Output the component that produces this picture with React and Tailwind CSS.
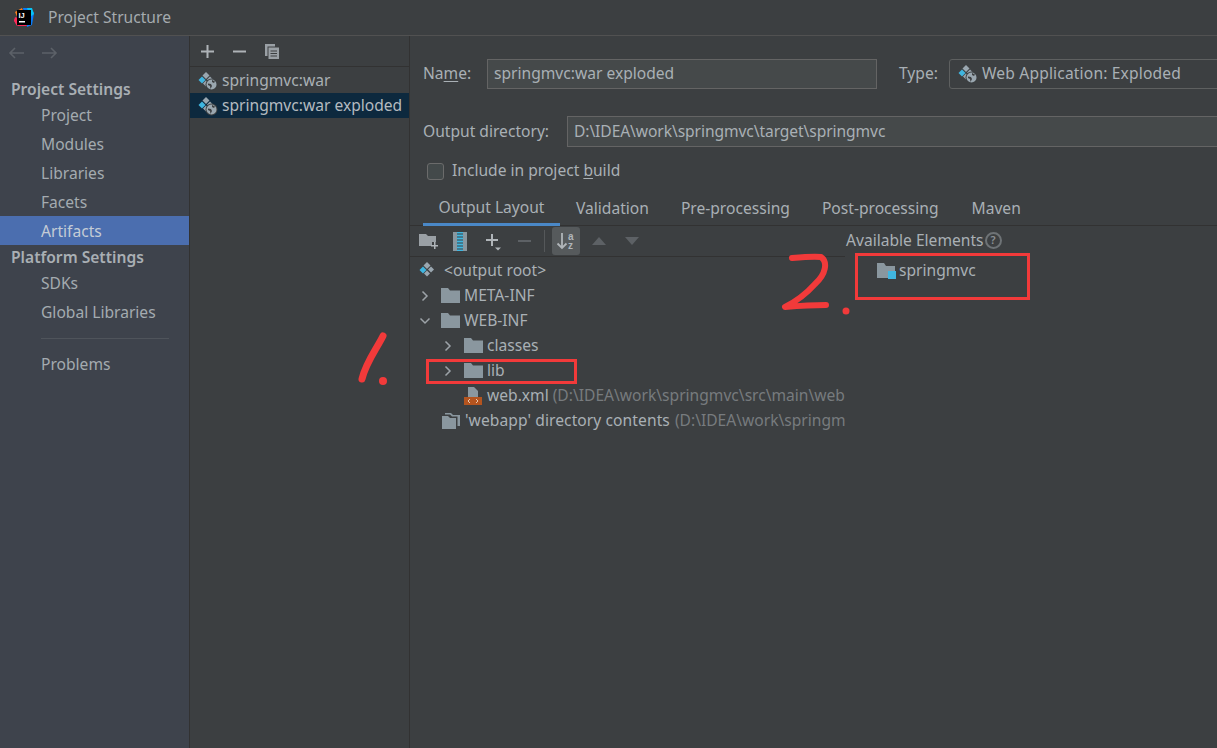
const TEXT = 'text-[#a9b0b5]';

function ArtifactIcon({ globe = true }) {
  return (
    <svg width="20" height="20" viewBox="0 0 20 20" className="shrink-0">
      <path d="M8 1l3.500 3.500L8 8 4.500 4.500z" fill="#9aa7b0" />
      <path d="M4 5.500L7.500 9 4 12.500.5 9z" fill="#40b6e0" />
      <path d="M12 5.500L15 8.500 12 11.500 9 8.500z" fill="#9aa7b0" />
      <path d="M8 9.500L11 12.500 8 15.500 5 12.500z" fill="#9aa7b0" />
      {globe && (
        <g>
          <circle cx="13.500" cy="13.500" r="6" fill="#3c3f41" />
          <circle cx="13.500" cy="13.500" r="5" fill="#9aa7b0" />
          <path d="M10 12.500l3 .5 1 2-1.500 3-.5-3-2-1zM14 9l3 1.500-1 1.500-2-1z" fill="#3c3f41" />
        </g>
      )}
    </svg>
  );
}

function Folder() {
  return (
    <svg width="19" height="15" viewBox="0 0 19 15" className="shrink-0">
      <path d="M0 0h7l2 2.500h10V15H0z" fill="#8a979f" />
    </svg>
  );
}

function Chevron({ open }) {
  return (
    <svg width="12" height="12" viewBox="0 0 12 12" className="shrink-0" fill="none" stroke="#9da3a8" strokeWidth="1.500">
      <path d={open ? 'M1.500 3.500L6 8l4.500-4.500' : 'M3.500 1.500L8 6l-4.500 4.500'} />
    </svg>
  );
}

function SideItem({ label, active, low }) {
  return (
    <div className={`h-[29px] pl-[41px] flex items-center ${low ? 'pt-[2px]' : ''} ${active ? 'bg-[#4b6eaf] text-[#c4ccd6]' : 'text-[#a4abb0]'}`}>
      {label}
    </div>
  );
}

function TreeRow({ indent, chevron, open, icon, label, hint }) {
  return (
    <div className="h-[25px] flex items-center whitespace-nowrap overflow-hidden" style={{ paddingLeft: indent }}>
      <span className="w-[22px] shrink-0 flex items-center">{chevron && <Chevron open={open} />}</span>
      <span className="w-[23px] shrink-0 flex items-center">{icon}</span>
      <span className={TEXT}>{label}</span>
      {hint && <span className="ml-[4px] text-[#777b7e]">{hint}</span>}
    </div>
  );
}

export default function App() {
  return (
    <div className="w-[1217px] h-[748px] overflow-hidden relative flex flex-col bg-[#3c3f41] text-[15.6px] font-['Noto_Sans','Open_Sans',sans-serif]">
      {/* Title bar */}
      <div className="h-[36px] shrink-0 flex items-center border-b border-[#515151] pl-[13px]">
        <svg width="21" height="21" viewBox="0 0 21 21">
          <path d="M2 5L9 1l2 5-6 6z" fill="#fc801d" />
          <path d="M2 10l5 3-3 6-3-5z" fill="#fe315d" />
          <path d="M10 1h8l3 5-2 12-5 2z" fill="#087cfa" />
          <path d="M14 1h5l2 6-4 3z" fill="#07c3f2" />
          <path d="M1 13l6-6 7 12H5z" fill="#fe2857" />
          <rect x="4" y="3" width="14" height="15" fill="#000" />
          <rect x="6" y="14" width="6" height="1.500" fill="#fff" />
          <text x="5.500" y="11" fontSize="7.500" fontWeight="700" fill="#fff" fontFamily="'Liberation Sans',sans-serif">IJ</text>
        </svg>
        <span className="ml-[14px] text-[#a5abaf]">Project Structure</span>
      </div>

      <div className="flex-1 flex min-h-0">
        {/* Sidebar */}
        <div className="w-[190px] shrink-0 bg-[#3e434c] border-r border-[#323232]">
          <div className="h-[34px] pl-[8px] flex items-center gap-[16px]">
            {['M16 8H2M7 3L2 8l5 5', 'M1 8h14M10 3l5 5-5 5'].map((d) => (
              <svg key={d} width="17" height="16" viewBox="0 0 17 16" fill="none" stroke="#5c6168" strokeWidth="1.600">
                <path d={d} />
              </svg>
            ))}
          </div>
          <div className="h-[30px] pl-[11px] pt-[1px] flex items-end font-semibold text-[#a9afb4] leading-[22px]">Project Settings</div>
          {['Project', 'Modules', 'Libraries', 'Facets'].map((l) => (
            <SideItem key={l} label={l} low />
          ))}
          <SideItem label="Artifacts" active low />
          <div className="h-[24px] pl-[11px] pt-[2px] flex items-center font-semibold text-[#a9afb4]">Platform Settings</div>
          <SideItem label="SDKs" />
          <SideItem label="Global Libraries" />
          <div className="my-[11px] ml-[41px] mr-[20px] border-t border-[#4f545b]" />
          <SideItem label="Problems" />
        </div>

        {/* Artifact list */}
        <div className="w-[220px] shrink-0 border-r border-[#323232]">
          <div className="h-[31px] pl-[10px] flex items-center gap-[17px] border-b border-[#323232]">
            <svg width="15" height="15" viewBox="0 0 15 15" fill="#aeb3b7"><path d="M6.500 1h2v5.500H14v2H8.500V14h-2V8.500H1v-2h5.500z" /></svg>
            <svg width="15" height="15" viewBox="0 0 15 15" fill="#aeb3b7"><path d="M1 6.500h13v2H1z" /></svg>
            <svg width="16" height="17" viewBox="0 0 16 17" fill="none">
              <path d="M1 1h10v2.500H3.500V13H1z" fill="#9aa0a5" />
              <path d="M4.500 4.500H15V16H4.500z" fill="#9aa0a5" />
              <path d="M6.500 8h6.500M6.500 10.500h6.500M6.500 13h6.500" stroke="#3c3f41" />
            </svg>
          </div>
          <div className="pt-[1px]">
            <div className="h-[25px] pl-[8px] flex items-center gap-[4px] text-[#a9b0b5]">
              <ArtifactIcon />
              <span>springmvc:war</span>
            </div>
            <div className="h-[25px] pl-[8px] flex items-center gap-[4px] bg-[#0d293e] text-[#b4bbc0]">
              <ArtifactIcon />
              <span>springmvc:war exploded</span>
            </div>
          </div>
        </div>

        {/* Detail */}
        <div className="flex-1 min-w-0 overflow-hidden">
          <div className="pl-[13px] mt-[23px] flex items-center h-[30px]">
            <span className={`w-[64px] shrink-0 ${TEXT}`}>Na<span className="underline underline-offset-2">m</span>e:</span>
            <div className="w-[390px] shrink-0 h-[30px] flex items-center px-[6px] bg-[#45494a] border border-[#646464] text-[#a9b0b5]">springmvc:war exploded</div>
            <span className={`ml-[22px] w-[50px] shrink-0 ${TEXT}`}>Type:</span>
            <div className="w-[300px] h-[30px] flex items-center gap-[4px] pl-[8px] border border-[#5e6060] rounded-[3px] text-[#a9b0b5] shrink-0">
              <ArtifactIcon />
              <span className="whitespace-nowrap tracking-[0.16px]">Web Application: Exploded</span>
            </div>
          </div>
          <div className="pl-[13px] mt-[27px] flex items-center h-[31px]">
            <span className={`w-[144px] shrink-0 ${TEXT}`}>Output directory:</span>
            <div className="w-[700px] shrink-0 h-[31px] flex items-center px-[6px] bg-[#45494a] border border-[#646464] text-[#a9b0b5] tracking-[-0.08px]">D:\IDEA\work\springmvc\target\springmvc</div>
          </div>
          <div className="pl-[17px] mt-[15px] h-[18px] flex items-center gap-[8px]">
            <span className="w-[17px] h-[17px] rounded-[3px] border border-[#6b6b6b] bg-[#43494a]" />
            <span className={TEXT}>Include in project <span className="underline underline-offset-2">b</span>uild</span>
          </div>

          {/* Tabs */}
          <div className="mt-[15px] h-[31px] flex border-b border-[#323232] pl-[13px] whitespace-nowrap">
            <div className={`w-[137px] h-[31px] pb-[2px] flex items-center justify-center border-b-[3px] border-[#4a88c7] ${TEXT}`}>Output Layout</div>
            {[['Validation', 'ml-[16px]'], ['Pre-processing', 'ml-[32px]'], ['Post-processing', 'ml-[32px]'], ['Maven', 'ml-[33px]']].map(([t, m]) => (
              <div key={t} className={`h-[30px] pb-[2px] flex items-center ${m} ${TEXT}`}>{t}</div>
            ))}
          </div>

          <div className="flex">
            {/* Output tree */}
            <div className="w-[435px] shrink-0">
              <div className="h-[31px] flex items-center pl-[9px] border-b border-[#323232]">
                <svg width="19" height="16" viewBox="0 0 19 16">
                  <path d="M0 1h7l2 2h8v6h-4v4H0z" fill="#9aa0a5" />
                  <path d="M15 9h1.500v3H19v1.500h-2.500V16H15v-2.500h-3V12h3z" fill="#b0b5b9" />
                </svg>
                <svg width="14" height="19" viewBox="0 0 14 19" className="ml-[15px]">
                  <rect width="14" height="19" fill="#8a979f" />
                  <rect x="4" width="6" height="19" fill="#40b6e0" />
                  <path d="M4 2h6M4 5h6M4 8h6M4 11h6M4 14h6M4 17h6" stroke="#3c3f41" />
                </svg>
                <svg width="19" height="19" viewBox="0 0 19 19" className="ml-[18px]" fill="#b0b5b9">
                  <path d="M6 2h2v5h5v2H8v5H6V9H1V7h5z" />
                  <path d="M10 15.500h6L13 18.500z" />
                </svg>
                <svg width="13" height="3" viewBox="0 0 13 3" className="ml-[14px]"><rect width="13" height="2" fill="#5d6165" /></svg>
                <div className="ml-[13px] h-[22px] border-l border-[#55585a]" />
                <div className="ml-[7px] w-[28px] h-[28px] rounded-[3px] bg-[#565a5c] flex items-center justify-center">
                  <svg width="22" height="20" viewBox="0 0 22 20" fill="none" stroke="#b0b5b9" strokeWidth="1.800">
                    <path d="M7 2v15M2.500 12.500L7 17l4.500-4.500" />
                    <text x="13" y="9" fontSize="10" fontWeight="700" stroke="none" fill="#b0b5b9" fontFamily="'Liberation Sans',sans-serif">a</text>
                    <text x="13" y="18" fontSize="10" fontWeight="700" stroke="none" fill="#b0b5b9" fontFamily="'Liberation Sans',sans-serif">z</text>
                  </svg>
                </div>
                <svg width="16" height="9" viewBox="0 0 16 9" className="ml-[11px]"><path d="M8 0l7 8H1z" fill="#5d6165" /></svg>
                <svg width="16" height="9" viewBox="0 0 16 9" className="ml-[17px]"><path d="M8 8L1 0h14z" fill="#5d6165" /></svg>
              </div>
              <div className="pt-[1px] overflow-hidden">
                <div className="h-[25px] pl-[9px] flex items-center gap-[5px] whitespace-nowrap">
                  <ArtifactIcon globe={false} />
                  <span className={TEXT}>&lt;output root&gt;</span>
                </div>
                <TreeRow indent={9} chevron icon={<Folder />} label="META-INF" />
                <TreeRow indent={9} chevron open icon={<Folder />} label="WEB-INF" />
                <TreeRow indent={32} chevron icon={<Folder />} label="classes" />
                <TreeRow indent={32} chevron icon={<Folder />} label="lib" />
                <TreeRow
                  indent={32}
                  icon={
                    <svg width="18" height="18" viewBox="0 0 18 18">
                      <path d="M4 0h6l4 4v6H4z" fill="#8a979f" />
                      <rect y="10" width="18" height="8" fill="#b4541f" />
                      <path d="M6 12l-2 2 2 2M12 12l2 2-2 2" fill="none" stroke="#e8c8b0" />
                    </svg>
                  }
                  label="web.xml"
                  hint="(D:\IDEA\work\springmvc\src\main\webapp\WEB-INF\web.xml)"
                />
                <div className="h-[25px] pl-[32px] flex items-center whitespace-nowrap overflow-hidden">
                  <svg width="18" height="16" viewBox="0 0 18 16" className="shrink-0">
                    <path d="M0 3h6l2 2h6v11H0z" fill="#8a979f" />
                    <path d="M3 0h6l2 2h7v11h-2.500V3.500H10L8 1.500H3z" fill="#8a979f" />
                  </svg>
                  <span className={`ml-[5px] tracking-[0.08px] ${TEXT}`}>'webapp' directory contents</span>
                  <span className="ml-[5px] text-[#777b7e]">(D:\IDEA\work\springmvc\src\main\webapp)</span>
                </div>
              </div>
            </div>
            {/* Available elements */}
            <div className="flex-1 min-w-0">
              <div className="h-[31px] pl-[1px] pb-[2px] flex items-center whitespace-nowrap">
                <span className={TEXT}>Available Elements</span>
                <span className="ml-[1px] w-[17px] h-[17px] rounded-full border-2 border-[#6e7376] flex items-center justify-center text-[11px] font-semibold text-[#8b9195]">?</span>
              </div>
              <div className="pl-[32px] h-[27px] flex items-center gap-[3px]">
                <svg width="19" height="17" viewBox="0 0 19 17" className="shrink-0">
                  <path d="M0 1h7l2 3h9v5h-7v7H0z" fill="#8a979f" />
                  <rect x="11" y="9" width="8" height="8" fill="#40b6e0" />
                </svg>
                <span className={TEXT}>springmvc</span>
              </div>
            </div>
          </div>
        </div>
      </div>

      {/* Red annotations drawn over the screenshot */}
      <div className="absolute left-[426px] top-[359px] w-[151px] h-[25px] border-[3px] border-[#f23a3a]" />
      <div className="absolute left-[855px] top-[253px] w-[175px] h-[47px] border-[3px] border-[#f23a3a]" />
      <svg className="absolute left-0 top-0 pointer-events-none" width="1217" height="748" fill="none" stroke="#f23a3a" strokeLinecap="round" strokeLinejoin="round">
        <path d="M383 336C376 350 366 362 362 379" strokeWidth="7" />
        <circle cx="383" cy="381" r="4" fill="#f23a3a" stroke="none" />
        <path d="M792 258C803 257 815 256 821 257C828 262 826 274 815 284C806 294 795 302 785 307C797 306 812 305 826 305" strokeWidth="6" />
        <circle cx="846" cy="311" r="3.500" fill="#f23a3a" stroke="none" />
      </svg>
    </div>
  );
}
